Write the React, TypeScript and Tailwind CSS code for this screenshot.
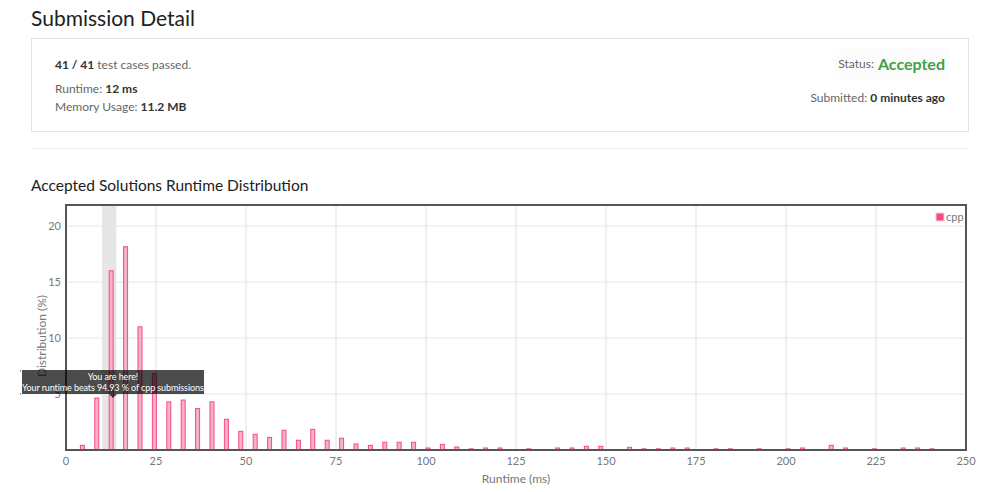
import React from "react";

const FONT = { fontFamily: 'Lato, "Open Sans", Arial, sans-serif' };

// bin index -> distribution (%)
const BINS: [number, number][] = [
  [1, 0.42], [2, 4.64], [3, 16.0], [4, 18.15], [5, 11.0], [6, 6.85], [7, 4.3], [8, 4.46],
  [9, 3.7], [10, 4.3], [11, 2.74], [12, 1.67], [13, 1.4], [14, 1.13], [15, 1.76], [16, 0.87],
  [17, 1.85], [18, 0.87], [19, 1.05], [20, 0.54], [21, 0.42], [22, 0.69], [23, 0.69], [24, 0.69],
  [25, 0.18], [26, 0.5], [27, 0.27], [28, 0.1], [29, 0.18], [30, 0.18], [32, 0.1], [34, 0.18],
  [35, 0.18], [36, 0.33], [37, 0.33], [39, 0.24], [40, 0.1], [41, 0.1], [42, 0.18], [43, 0.18],
  [45, 0.1], [46, 0.1], [48, 0.1], [50, 0.1], [51, 0.18], [53, 0.42], [54, 0.18], [56, 0.1],
  [58, 0.18], [59, 0.18], [60, 0.1],
];

const X0 = 66;
const X1 = 966;
const Y0 = 450;
const YT = 205;
const PX_MS = (X1 - X0) / 250;
const PX_PCT = 11.2;

const xOf = (ms: number) => X0 + ms * PX_MS;
const yOf = (pct: number) => Y0 - pct * PX_PCT;

function RuntimeChart() {
  return (
    <div className="relative h-[296px] w-[1000px]">
      <svg width={1000} height={296} viewBox="0 196 1000 296" className="block">
        {/* highlight band for your runtime */}
        <rect x={xOf(10)} y={YT} width={xOf(14) - xOf(10)} height={Y0 - YT} fill="#e6e6e6" />

        {/* grid */}
        {[25, 50, 75, 100, 125, 150, 175, 200, 225].map((v) => (
          <line key={v} x1={xOf(v)} x2={xOf(v)} y1={YT} y2={Y0} stroke="#e0e0e0" strokeWidth={1} />
        ))}
        {[5, 10, 15, 20].map((v) => (
          <line key={v} x1={X0} x2={X1} y1={yOf(v)} y2={yOf(v)} stroke="#e6e6e6" strokeWidth={1} />
        ))}

        {/* bars */}
        {BINS.map(([k, v]) => {
          const c = xOf(4 * k + 0.55);
          const h = Math.max(v * PX_PCT, 1.2);
          return (
            <rect
              key={k}
              x={c - 2}
              y={Y0 - h}
              width={4}
              height={h}
              fill="#f8b0c8"
              stroke="#f24d80"
              strokeWidth={1}
            />
          );
        })}

        {/* frame */}
        <rect x={X0} y={YT} width={X1 - X0} height={Y0 - YT} fill="none" stroke="#555" strokeWidth={2} />

        {/* y ticks */}
        {[5, 10, 15, 20].map((v) => (
          <text key={v} x={61} y={yOf(v) + 4} textAnchor="end" fontSize={11} fill="#777" style={FONT}>
            {v}
          </text>
        ))}
        {/* x ticks */}
        {[0, 25, 50, 75, 100, 125, 150, 175, 200, 225, 250].map((v) => (
          <text key={v} x={xOf(v)} y={465} textAnchor="middle" fontSize={11} fill="#777" style={FONT}>
            {v}
          </text>
        ))}

        <text x={516} y={483} textAnchor="middle" fontSize={12} fill="#777" style={FONT}>
          Runtime (ms)
        </text>
        <text
          x={0}
          y={0}
          transform="translate(46 336) rotate(-90)"
          textAnchor="middle"
          fontSize={12}
          fill="#777"
          style={FONT}
        >
          Distribution (%)
        </text>

        {/* legend */}
        <rect x={936} y={213} width={8} height={8} fill="#f24d80" stroke="#fbd0de" strokeWidth={1} />
        <text x={946} y={221} fontSize={11} fill="#777" style={FONT}>
          cpp
        </text>

        {/* little marks left of the tooltip */}
        <rect x={20} y={370} width={1} height={2} fill="#999" />
        <rect x={20} y={393} width={1} height={2} fill="#999" />
      </svg>

      {/* tooltip */}
      <div
        className="absolute left-[22px] top-[174px] h-[24px] w-[182px] whitespace-nowrap bg-black/70 pt-[1px] text-center text-[9px] leading-[11px] tracking-[-0.1px] text-white"
        style={FONT}
      >
        <div>You are here!</div>
        <div>Your runtime beats 94.93 % of cpp submissions.</div>
        <span className="absolute left-[87px] top-[24px] h-0 w-0 border-x-[4px] border-t-[4px] border-x-transparent border-t-black/70" />
      </div>
    </div>
  );
}

export default function App() {
  return (
    <div className="h-[492px] w-[1000px] overflow-hidden bg-white text-[#333]" style={FONT}>
      <div className="px-[31px]">
        <h1 className="mt-[3px] text-[21px] leading-[30px] font-normal text-[#212121]">Submission Detail</h1>

        <div className="mt-[5px] flex h-[94px] justify-between border border-[#e4e4e4]">
          <div className="pl-[23px] pt-[17px] text-[12px]">
            <div className="leading-[18px] text-[#666]">
              <b className="font-bold text-[#333]">41 / 41</b> test cases passed.
            </div>
            <div className="mt-[6px] leading-[18px] text-[#666]">
              Runtime: <b className="font-bold text-[#333]">12 ms</b>
            </div>
            <div className="leading-[17px] text-[#666]">
              Memory Usage: <b className="font-bold text-[#333]">11.2 MB</b>
            </div>
          </div>

          <div className="flex flex-col items-end pr-[18px] pt-[10px] text-[12px]">
            <div className="flex h-[30px] items-center gap-[4px] bg-[#fcfcfc] px-[5px] text-[#666]">
              <span>Status:</span>
              <span className="text-[16px] font-bold text-[#43a047]">Accepted</span>
            </div>
            <div className="mt-[10px] px-[5px] leading-[18px] text-[#666]">
              Submitted: <b className="font-bold text-[#333]">0 minutes ago</b>
            </div>
          </div>
        </div>

        <div className="mt-[16px] h-px bg-[#eeeeee]" />

        <h3 className="mt-[25px] text-[15.5px] leading-[22px] text-[#212121]">Accepted Solutions Runtime Distribution</h3>
      </div>

      <RuntimeChart />
    </div>
  );
}
